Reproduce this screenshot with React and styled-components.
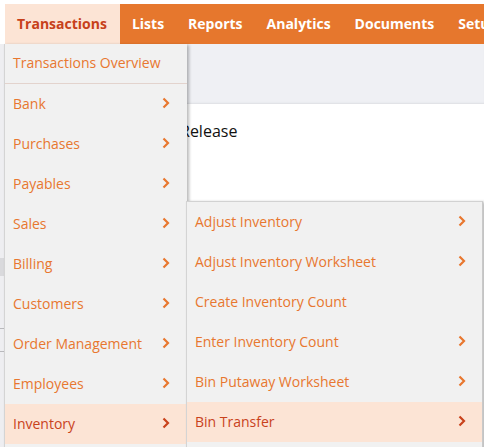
import React from "react";
import styled, { createGlobalStyle } from "styled-components";

const Global = createGlobalStyle`
  html, body { margin: 0; padding: 0; }
  body { background: #ffffff; font-family: "Open Sans", "Liberation Sans", sans-serif; overflow: hidden; }
  #root { width: 484px; height: 447px; }
`;

const Page = styled.div`
  position: relative;
  width: 484px;
  height: 447px;
  overflow: hidden;
  background: #ffffff;
  padding-top: 4px;
  box-sizing: border-box;
`;

const NavBar = styled.nav`
  display: flex;
  height: 40px;
  margin-left: 5px;
  background: #e6772d;
  white-space: nowrap;
`;

const NavTab = styled.div`
  display: flex;
  align-items: center;
  padding: 0 12px 1px;
  font-size: 14px;
  font-weight: 700;
  color: ${(p) => (p.$active ? "#c7401a" : "#ffffff")};
  background: ${(p) => (p.$active ? "#fce4d5" : "transparent")};
  padding-right: ${(p) => (p.$active ? "13px" : "12px")};
`;

const SubBand = styled.div`
  height: 60px;
  background: #eff0f4;
  box-shadow: inset 0 -2px 2px -1px #dedfe3;
`;

const Content = styled.div`
  display: flex;
  flex-direction: column;
  padding: 16px 0 0 180px;
  height: 300px;
  background: #ffffff;
`;

const Heading = styled.div`
  font-size: 16px;
  color: #111;
`;

const LeftStrip = styled.div`
  position: absolute;
  left: 0;
  top: 44px;
  width: 5px;
  height: 403px;
  background: #eeeef1;
`;

const StripMark = styled.div`
  position: absolute;
  left: 0;
  width: 5px;
  top: ${(p) => p.$top}px;
  height: ${(p) => p.$h}px;
  background: ${(p) => p.$c};
`;

const Menu = styled.div`
  position: absolute;
  left: ${(p) => p.$left}px;
  top: ${(p) => p.$top}px;
  width: ${(p) => p.$width}px;
  display: flex;
  flex-direction: column;
  background: #f1f1f1;
  box-shadow: 2px 1px 3px rgba(0, 0, 0, 0.28);
  border-left: 1px solid #d4d4d4;
  border-top: ${(p) => (p.$bordered ? "1px solid #d2d2d2" : "none")};
  border-right: ${(p) => (p.$bordered ? "1px solid #c9c9c9" : "none")};
  padding-bottom: 10px;
`;

const Item = styled.div`
  display: flex;
  align-items: center;
  justify-content: space-between;
  height: 40px;
  box-sizing: border-box;
  padding: 0 ${(p) => p.$pr}px 2px 8px;
  font-size: 14px;
  color: ${(p) => (p.$active ? "#c9421c" : "#e8772f")};
  background: ${(p) => (p.$active ? "#fce4d5" : "transparent")};
  border-bottom: ${(p) => (p.$sep ? "1px solid #e3d3cd" : "none")};
  white-space: nowrap;
`;

const Chevron = ({ active }) => (
  <svg width="8" height="12" viewBox="0 0 8 12">
    <polyline
      points="1.5,1.5 6,6 1.5,10.5"
      fill="none"
      stroke={active ? "#c9421c" : "#e8772f"}
      strokeWidth="2.2"
    />
  </svg>
);

const navItems = ["Transactions", "Lists", "Reports", "Analytics", "Documents", "Setup"];

const menu1 = [
  { label: "Transactions Overview", sep: true },
  { label: "Bank", arrow: true },
  { label: "Purchases", arrow: true },
  { label: "Payables", arrow: true },
  { label: "Sales", arrow: true },
  { label: "Billing", arrow: true },
  { label: "Customers", arrow: true },
  { label: "Order Management", arrow: true },
  { label: "Employees", arrow: true },
  { label: "Inventory", arrow: true, active: true },
];

const menu2 = [
  { label: "Adjust Inventory", arrow: true },
  { label: "Adjust Inventory Worksheet", arrow: true },
  { label: "Create Inventory Count" },
  { label: "Enter Inventory Count", arrow: true },
  { label: "Bin Putaway Worksheet", arrow: true },
  { label: "Bin Transfer", arrow: true, active: true },
];

export default function App() {
  return (
    <>
      <Global />
      <Page>
        <NavBar>
          {navItems.map((n, i) => (
            <NavTab key={n} $active={i === 0}>
              {n}
            </NavTab>
          ))}
        </NavBar>
        <SubBand />
        <Content>
          <Heading>Release</Heading>
        </Content>
        <LeftStrip />
        <StripMark $top={258} $h={18} $c="#d9d9dc" />
        <StripMark $top={328} $h={1} $c="#b9b9bc" />
        <StripMark $top={351} $h={1} $c="#b9b9bc" />
        <Menu $left={4} $top={44} $width={182}>
          {menu1.map((m) => (
            <Item key={m.label} $active={m.active} $sep={m.sep} $pr={17}>
              <span>{m.label}</span>
              {m.arrow && <Chevron active={m.active} />}
            </Item>
          ))}
        </Menu>
        <Menu $left={186} $top={201} $width={295} $bordered>
          {menu2.map((m) => (
            <Item key={m.label} $active={m.active} $pr={16}>
              <span>{m.label}</span>
              {m.arrow && <Chevron active={m.active} />}
            </Item>
          ))}
        </Menu>
      </Page>
    </>
  );
}
